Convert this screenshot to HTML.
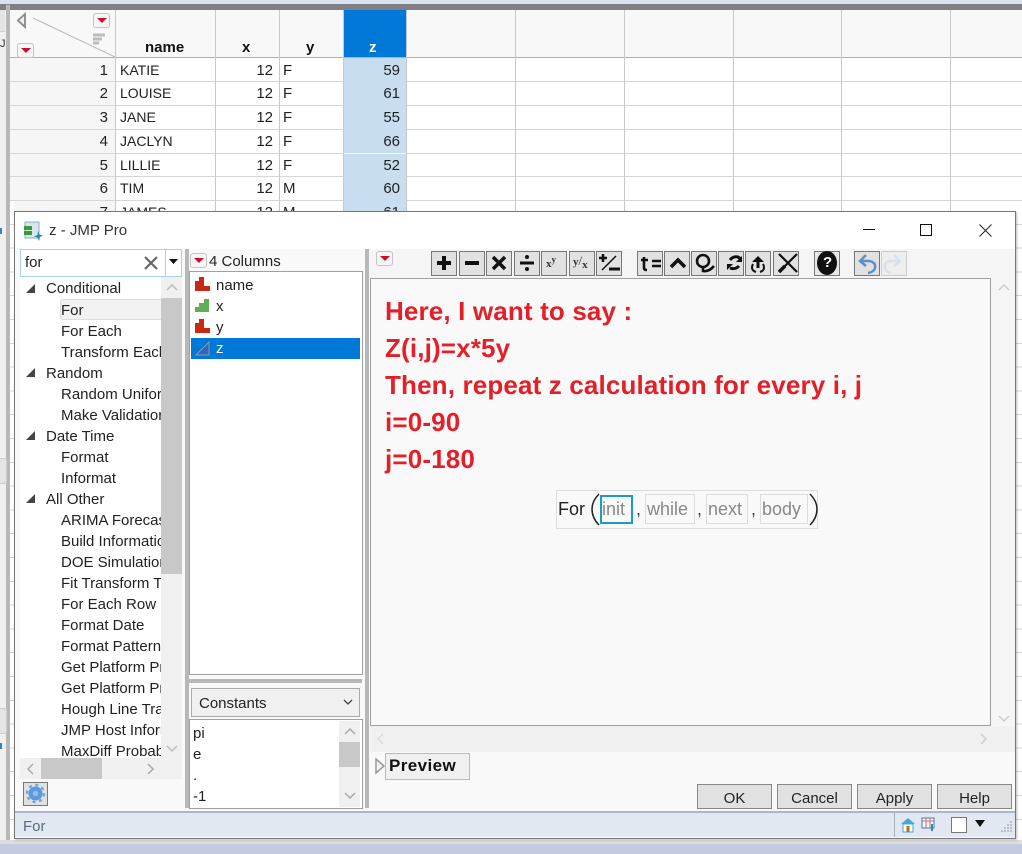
<!DOCTYPE html>
<html><head><meta charset="utf-8"><style>
html,body{margin:0;padding:0;background:#fff}
#p{position:relative;width:1022px;height:854px;overflow:hidden;font-family:"Liberation Sans",sans-serif;font-size:15px;color:#222;background:#fff}
#p div,#p span.t,#p svg{position:absolute}
.t{white-space:nowrap;line-height:20px;display:block;margin-top:1px}
.r{text-align:right}
.b{font-weight:bold;color:#111}
.t.n{font-size:14px;margin-top:0}
.tb{width:24px;height:23px;background:#e1e1e1;border:1px solid #777;top:251px}
.btn{top:784px;width:73px;height:23px;background:#e1e1e1;border:1px solid #888;text-align:center;line-height:27px;color:#222;font-size:15px}
.redbtn{width:15px;height:13px;background:#f6f6f6;border:1px solid #c4c4c4;border-radius:3px}
.redbtn:after{content:"";position:absolute;left:3px;top:4px;border-left:5px solid transparent;border-right:5px solid transparent;border-top:5px solid #c8102e}
.red{left:385px;color:#e32029;font-weight:bold;font-size:26px;line-height:36px;white-space:nowrap;letter-spacing:.15px}
.ph{top:494px;height:28px;background:#f9f9f9;border:1px solid #ddd;color:#888;font-size:18px;line-height:28px;text-align:left;padding-left:1px}
.cm{color:#444;font-size:18px;top:498px}
</style></head><body><div id="p">

<!-- background strip -->
<div style="left:0;top:0;width:1022px;height:4px;background:#dbe3f1"></div>
<div style="left:0;top:4px;width:1022px;height:6px;background:#7f8086"></div>
<div style="left:0;top:10px;width:6px;height:844px;background:#f0f0f0"></div>
<div style="left:6px;top:5px;width:4px;height:849px;background:#b8b8b8"></div>
<div style="left:0;top:10px;width:5px;height:21px;background:#e4e4e4;border-bottom:1px solid #ccc"></div>
<span class="t" style="left:0;top:33px;font-size:11px;color:#333">J</span>
<div style="left:0;top:228px;width:2px;height:6px;background:#3a80c0"></div>
<div style="left:0;top:743px;width:2px;height:6px;background:#3a80c0"></div>
<div style="left:10px;top:10px;width:1012px;height:47px;background:#f8f8f8"></div>
<div style="left:10px;top:57px;width:105px;height:160px;background:#f6f6f6"></div>

<!-- grid -->
<div style="left:10px;top:57px;width:1012px;height:1px;background:#b0b0b0"></div>
<div style="left:10px;top:81px;width:1012px;height:1px;background:#d5d5da"></div>
<div style="left:10px;top:105px;width:1012px;height:1px;background:#d5d5da"></div>
<div style="left:10px;top:129px;width:1012px;height:1px;background:#d5d5da"></div>
<div style="left:10px;top:153px;width:1012px;height:1px;background:#d5d5da"></div>
<div style="left:10px;top:176px;width:1012px;height:1px;background:#d5d5da"></div>
<div style="left:10px;top:200px;width:1012px;height:1px;background:#d5d5da"></div>
<div style="left:115px;top:10px;width:1px;height:205px;background:#c8c8cc"></div>
<div style="left:215px;top:10px;width:1px;height:205px;background:#c8c8cc"></div>
<div style="left:279px;top:10px;width:1px;height:205px;background:#c8c8cc"></div>
<div style="left:343px;top:10px;width:1px;height:205px;background:#c8c8cc"></div>
<div style="left:406px;top:10px;width:1px;height:205px;background:#c8c8cc"></div>
<div style="left:515px;top:10px;width:1px;height:205px;background:#c8c8cc"></div>
<div style="left:624px;top:10px;width:1px;height:205px;background:#c8c8cc"></div>
<div style="left:733px;top:10px;width:1px;height:205px;background:#c8c8cc"></div>
<div style="left:841px;top:10px;width:1px;height:205px;background:#c8c8cc"></div>
<div style="left:950px;top:10px;width:1px;height:205px;background:#c8c8cc"></div>
<div style="left:344px;top:10px;width:62px;height:47px;background:#0078d7"></div>
<div style="left:344px;top:58px;width:62px;height:159px;background:#c9ddf0"></div>
<div style="left:344px;top:153px;width:62px;height:1px;background:#f4f8fc"></div>
<div style="left:10px;top:200px;width:4px;height:640px;background:repeating-linear-gradient(to bottom,#d5d5da 0,#d5d5da 1px,#fff 1px,#fff 23.800px)"></div>
<div style="left:1016px;top:200px;width:6px;height:640px;background:repeating-linear-gradient(to bottom,#d5d5da 0,#d5d5da 1px,#fff 1px,#fff 23.800px)"></div>

<!-- corner -->
<svg style="left:10px;top:10px" width="106" height="48"><line x1="23" y1="8" x2="105" y2="47" stroke="#bbb"/><path d="M15 4 L8 10.500 L15 17Z" fill="#f0f0f0" stroke="#888" stroke-width="1.800"/><path d="M83 25h12M83 29h9M83 33h6" stroke="#bcbcbc" stroke-width="3"/></svg>
<div class="redbtn" style="left:93px;top:13px"></div>
<div class="redbtn" style="left:17px;top:43px"></div>

<span class="t b" style="left:145px;top:37px">name</span>
<span class="t b" style="left:242px;top:37px">x</span>
<span class="t b" style="left:306px;top:37px">y</span>
<span class="t" style="left:369px;top:37px;color:#fff;font-weight:bold">z</span>

<span class="t r" style="left:60px;width:48px;top:60px">1</span><span class="t n" style="left:120px;top:60px">KATIE</span><span class="t r" style="left:220px;width:53px;top:60px">12</span><span class="t" style="left:283px;top:60px">F</span><span class="t r" style="left:350px;width:50px;top:60px">59</span>
<span class="t r" style="left:60px;width:48px;top:83px">2</span><span class="t n" style="left:120px;top:83px">LOUISE</span><span class="t r" style="left:220px;width:53px;top:83px">12</span><span class="t" style="left:283px;top:83px">F</span><span class="t r" style="left:350px;width:50px;top:83px">61</span>
<span class="t r" style="left:60px;width:48px;top:107px">3</span><span class="t n" style="left:120px;top:107px">JANE</span><span class="t r" style="left:220px;width:53px;top:107px">12</span><span class="t" style="left:283px;top:107px">F</span><span class="t r" style="left:350px;width:50px;top:107px">55</span>
<span class="t r" style="left:60px;width:48px;top:131px">4</span><span class="t n" style="left:120px;top:131px">JACLYN</span><span class="t r" style="left:220px;width:53px;top:131px">12</span><span class="t" style="left:283px;top:131px">F</span><span class="t r" style="left:350px;width:50px;top:131px">66</span>
<span class="t r" style="left:60px;width:48px;top:155px">5</span><span class="t n" style="left:120px;top:155px">LILLIE</span><span class="t r" style="left:220px;width:53px;top:155px">12</span><span class="t" style="left:283px;top:155px">F</span><span class="t r" style="left:350px;width:50px;top:155px">52</span>
<span class="t r" style="left:60px;width:48px;top:178px">6</span><span class="t n" style="left:120px;top:178px">TIM</span><span class="t r" style="left:220px;width:53px;top:178px">12</span><span class="t" style="left:283px;top:178px">M</span><span class="t r" style="left:350px;width:50px;top:178px">60</span>
<span class="t r" style="left:60px;width:48px;top:202px">7</span><span class="t n" style="left:120px;top:202px">JAMES</span><span class="t r" style="left:220px;width:53px;top:202px">12</span><span class="t" style="left:283px;top:202px">M</span><span class="t r" style="left:350px;width:50px;top:202px">61</span>

<!-- bottom strips -->
<div style="left:0;top:840px;width:1022px;height:4px;background:#dcdcdc"></div>
<div style="left:0;top:844px;width:1022px;height:10px;background:#c2cbdf"></div>
<div style="left:0;top:458px;width:6px;height:24px;background:#e4e4e4;border:1px solid #ccc;border-left:0"></div>
<div style="left:0;top:708px;width:6px;height:24px;background:#e4e4e4;border:1px solid #ccc;border-left:0"></div>

<!-- dialog -->
<div style="left:14px;top:211px;width:1000px;height:626px;background:#f9f9f9;border:1px solid #777;box-shadow:1px 1px 2px rgba(0,0,0,.25)"></div>
<div style="left:15px;top:212px;width:1000px;height:37px;background:#fff"></div>
<svg style="left:23px;top:220px" width="22" height="22"><rect x="2" y="2" width="14" height="16" fill="#d8e4ee" stroke="#9ab" /><rect x="1" y="6" width="8" height="4" fill="#3a9a3a"/><rect x="1" y="11" width="8" height="4" fill="#3a9a3a"/><path d="M15 11l1.500 3.500 3.500 1-3 1.500-1 4-1.500-3.500-3.500-1 3.500-1.500z" fill="#2a8ac0"/></svg>
<span class="t" style="left:49px;top:220px;color:#333;font-size:15px">z - JMP Pro</span>
<div style="left:863px;top:229px;width:12px;height:1px;background:#111"></div>
<div style="left:920px;top:224px;width:10px;height:10px;border:1px solid #111"></div>
<svg style="left:979px;top:224px" width="13" height="13"><path d="M.5.5L12.500 12.500M12.500.5L.5 12.500" stroke="#222" fill="none"/></svg>

<!-- search -->
<div style="left:20px;top:249px;width:160px;height:26px;background:#fff;border:1px solid #a9d0ea"></div>
<div style="left:165px;top:249px;width:1px;height:28px;background:#a9d0ea"></div>
<span class="t" style="left:25px;top:252px">for</span>
<svg style="left:143px;top:255px" width="16" height="16"><path d="M2 2L14 14M14 2L2 14" stroke="#666" stroke-width="2.200"/></svg>
<svg style="left:168px;top:259px" width="11" height="6"><path d="M1 0H10L5.500 5Z" fill="#111"/></svg>

<!-- tree -->
<div style="left:20px;top:277px;width:141px;height:481px;background:#fff"></div>
<svg style="left:26px;top:284px" width="10" height="10"><path d="M9 0V9H0Z" fill="#444"/></svg>
<svg style="left:26px;top:368px" width="10" height="10"><path d="M9 0V9H0Z" fill="#444"/></svg>
<svg style="left:26px;top:431px" width="10" height="10"><path d="M9 0V9H0Z" fill="#444"/></svg>
<svg style="left:26px;top:494px" width="10" height="10"><path d="M9 0V9H0Z" fill="#444"/></svg>
<div style="left:60px;top:299px;width:101px;height:19px;background:#f2f2f2;border:1px solid #ddd;border-right:0;border-radius:3px 0 0 3px"></div>
<div style="left:20px;top:277px;width:141px;height:481px;overflow:hidden;background:transparent">
<span class="t" style="left:26px;top:1px">Conditional</span>
<span class="t" style="left:41px;top:23px">For</span>
<span class="t" style="left:41px;top:44px">For Each</span>
<span class="t" style="left:41px;top:65px">Transform Each</span>
<span class="t" style="left:26px;top:86px">Random</span>
<span class="t" style="left:41px;top:107px">Random Uniform</span>
<span class="t" style="left:41px;top:128px">Make Validation</span>
<span class="t" style="left:26px;top:149px">Date Time</span>
<span class="t" style="left:41px;top:170px">Format</span>
<span class="t" style="left:41px;top:191px">Informat</span>
<span class="t" style="left:26px;top:212px">All Other</span>
<span class="t" style="left:41px;top:233px">ARIMA Forecast</span>
<span class="t" style="left:41px;top:254px">Build Information</span>
<span class="t" style="left:41px;top:275px">DOE Simulation</span>
<span class="t" style="left:41px;top:296px">Fit Transform To</span>
<span class="t" style="left:41px;top:317px">For Each Row</span>
<span class="t" style="left:41px;top:338px">Format Date</span>
<span class="t" style="left:41px;top:359px">Format Pattern</span>
<span class="t" style="left:41px;top:380px">Get Platform Pr</span>
<span class="t" style="left:41px;top:401px">Get Platform Pr</span>
<span class="t" style="left:41px;top:422px">Hough Line Tra</span>
<span class="t" style="left:41px;top:443px">JMP Host Inform</span>
<span class="t" style="left:41px;top:464px">MaxDiff Probab</span>
</div>
<div style="left:161px;top:277px;width:21px;height:491px;background:#f0f0f0"></div>
<div style="left:161px;top:298px;width:21px;height:276px;background:#c8c8c8"></div>
<svg style="left:165px;top:283px" width="14" height="10"><path d="M2 7L7 2L12 7" stroke="#bbb" stroke-width="1.500" fill="none"/></svg>
<svg style="left:165px;top:744px" width="14" height="10"><path d="M2 2L7 7L12 2" stroke="#bbb" stroke-width="1.500" fill="none"/></svg>
<div style="left:20px;top:758px;width:162px;height:21px;background:#f0f0f0"></div>
<div style="left:41px;top:758px;width:61px;height:21px;background:#c8c8c8"></div>
<svg style="left:26px;top:762px" width="10" height="14"><path d="M7 2L2 7L7 12" stroke="#aaa" stroke-width="1.500" fill="none"/></svg>
<svg style="left:146px;top:762px" width="10" height="14"><path d="M2 2L7 7L2 12" stroke="#aaa" stroke-width="1.500" fill="none"/></svg>
<div style="left:23px;top:782px;width:23px;height:22px;background:#e1e1e1;border:1px solid #777"></div>
<svg style="left:25px;top:783px" width="21" height="21"><circle cx="10.500" cy="10.500" r="7" fill="#5b9ade"/><circle cx="10.500" cy="10.500" r="8.500" fill="none" stroke="#6ea8e4" stroke-width="2.500" stroke-dasharray="3 3.600"/><circle cx="10.500" cy="10.500" r="2.800" fill="#8fbcea"/></svg>

<!-- separators -->
<div style="left:185px;top:249px;width:4px;height:559px;background:#b8b8b8"></div>
<div style="left:365px;top:249px;width:4px;height:559px;background:#b8b8b8"></div>

<!-- columns -->
<div class="redbtn" style="left:190px;top:253px"></div>
<span class="t" style="left:209px;top:251px">4 Columns</span>
<div style="left:189px;top:271px;width:172px;height:402px;background:#fff;border:1px solid #a0a0a0"></div>
<div style="left:191px;top:338px;width:169px;height:21px;background:#0078d7"></div>
<svg style="left:194px;top:277px" width="16" height="16"><path d="M1 14V4H5V0H10V9H16V14Z" fill="#c62a14"/></svg>
<svg style="left:194px;top:298px" width="16" height="16"><path d="M1 14V9H5V5H10V1H15V14Z" fill="#5fae57"/></svg>
<svg style="left:194px;top:319px" width="16" height="16"><path d="M1 14V4H5V0H10V9H16V14Z" fill="#c62a14"/></svg>
<svg style="left:195px;top:341px" width="16" height="15"><path d="M1 14L14 1V14Z" fill="#2f66b5" stroke="#7f9cc8"/></svg>
<span class="t" style="left:216px;top:275px">name</span>
<span class="t" style="left:216px;top:296px">x</span>
<span class="t" style="left:216px;top:317px">y</span>
<span class="t" style="left:216px;top:338px;color:#fff">z</span>
<div style="left:189px;top:679px;width:173px;height:4px;background:#b8b8b8"></div>
<div style="left:191px;top:688px;width:167px;height:27px;background:#f0f0f0;border:1px solid #aaa"></div>
<span class="t" style="left:199px;top:693px">Constants</span>
<svg style="left:342px;top:698px" width="12" height="8"><path d="M2 2L6 6L10 2" stroke="#444" stroke-width="1.300" fill="none"/></svg>
<div style="left:189px;top:719px;width:172px;height:88px;background:#fff;border:1px solid #a0a0a0"></div>
<span class="t" style="left:193px;top:723px">pi</span>
<span class="t" style="left:193px;top:744px">e</span>
<span class="t" style="left:193px;top:765px">.</span>
<span class="t" style="left:193px;top:786px">-1</span>
<div style="left:339px;top:721px;width:21px;height:86px;background:#f0f0f0"></div>
<div style="left:339px;top:742px;width:21px;height:25px;background:#c8c8c8"></div>
<svg style="left:343px;top:727px" width="14" height="10"><path d="M2 7L7 2L12 7" stroke="#aaa" stroke-width="1.500" fill="none"/></svg>
<svg style="left:343px;top:791px" width="14" height="10"><path d="M2 2L7 7L12 2" stroke="#aaa" stroke-width="1.500" fill="none"/></svg>

<!-- toolbar -->
<div style="left:369px;top:249px;width:646px;height:29px;background:#f5f5f5"></div>
<div class="redbtn" style="left:376px;top:251px"></div>
<div class="tb" style="left:431px"></div><div class="tb" style="left:459px"></div><div class="tb" style="left:486px"></div><div class="tb" style="left:514px"></div><div class="tb" style="left:541px"></div><div class="tb" style="left:569px"></div><div class="tb" style="left:596px"></div>
<div class="tb" style="left:637px"></div><div class="tb" style="left:664px"></div><div class="tb" style="left:691px"></div><div class="tb" style="left:718px"></div><div class="tb" style="left:745px"></div><div class="tb" style="left:773px"></div>
<div class="tb" style="left:814px;background:#e8e8e8"></div><div class="tb" style="left:854px"></div><div class="tb" style="left:881px;background:#eee;border-color:#ccc"></div>
<svg style="left:430px;top:250px" width="480" height="26" fill="none" stroke="#111">
<path d="M14 6V20M7 13H21" stroke-width="4"/>
<path d="M35 13H49" stroke-width="4"/>
<path d="M63 7L75 19M75 7L63 19" stroke-width="3.500"/>
<path d="M90 13H104" stroke-width="3"/><circle cx="97" cy="7" r="2" fill="#111" stroke="none"/><circle cx="97" cy="19" r="2" fill="#111" stroke="none"/>
<path d="M173 4V12M169 8H177" stroke-width="2.500"/><path d="M172 20L186 6" stroke-width="1.500"/><path d="M179 19H190" stroke-width="3"/>
<path d="M214 7V18Q214 20 217 20M211 10H218M222 11H231M222 16H231" stroke-width="2.600"/>
<path d="M241 17L248 10L255 17" stroke-width="3.500"/>
<circle cx="273" cy="11" r="6" stroke-width="2.600"/><path d="M273 17V21Q279 22 284 16" stroke-width="2.600"/>
<path d="M300 10Q303 6 308 7L311 9M309 16Q305 20 300 18" stroke-width="3"/><path d="M312 6V12H306Z" fill="#111" stroke="none"/><path d="M297 20V14H303Z" fill="#111" stroke="none"/>
<path d="M328 6L322 12H334Z" fill="#111" stroke="none"/><path d="M328 11V18" stroke-width="3"/><path d="M323 14Q320 20 326 22M333 14Q336 20 330 22" stroke-width="2"/>
<path d="M349 4L367 22M367 4L349 22" stroke-width="2.200"/><path d="M349 22L355 16" stroke-width="3.500"/>
<ellipse cx="397" cy="13" rx="10" ry="12" fill="#111" stroke="none"/>
<path d="M436 5L430 11L436 16" stroke="#5f8fc8" stroke-width="2.500"/><path d="M431 11H439Q446 12 445 18Q444 22 438 23" stroke="#5f8fc8" stroke-width="2.500"/>
<path d="M464 5L470 11L464 16" stroke="#d8e2ec" stroke-width="2.500"/><path d="M469 11H460Q454 12 455 18Q456 22 461 23" stroke="#d8e2ec" stroke-width="2.500"/>
</svg>
<span class="t" style="left:823px;top:252px;color:#fff;font-weight:bold;font-size:15px">?</span>
<span class="t" style="left:546px;top:253px;font-family:'Liberation Serif',serif;font-size:11px;font-weight:bold;color:#333">x<sup style="font-size:9px;line-height:0">y</sup></span>
<span class="t" style="left:573px;top:250px;font-family:'Liberation Serif',serif;font-size:11px;font-weight:bold;color:#333">y<span style="font-size:13px;font-weight:normal">/</span><span style="position:relative;top:3px">x</span></span>

<!-- editor -->
<div style="left:991px;top:278px;width:24px;height:447px;background:#f5f5f5"></div>
<div style="left:370px;top:278px;width:619px;height:446px;background:#f9f9f9;border:1px solid #a0a0a0"></div>
<div style="left:370px;top:726px;width:645px;height:26px;background:#f0f0f0"></div>
<svg style="left:997px;top:283px" width="14" height="10"><path d="M2 7L7 2L12 7" stroke="#ccc" stroke-width="1.500" fill="none"/></svg>
<svg style="left:997px;top:714px" width="14" height="10"><path d="M2 2L7 7L12 2" stroke="#ccc" stroke-width="1.500" fill="none"/></svg>
<svg style="left:376px;top:732px" width="10" height="14"><path d="M7 2L2 7L7 12" stroke="#ddd" stroke-width="1.500" fill="none"/></svg>
<svg style="left:979px;top:732px" width="10" height="14"><path d="M2 2L7 7L2 12" stroke="#ccc" stroke-width="1.500" fill="none"/></svg>

<div class="red" style="top:293px">Here, I want to say :</div>
<div class="red" style="top:330px">Z(i,j)=x*5y</div>
<div class="red" style="top:367px">Then, repeat z calculation for every i, j</div>
<div class="red" style="top:404px">i=0-90</div>
<div class="red" style="top:441px">j=0-180</div>

<div style="left:556px;top:490px;width:260px;height:37px;background:#f9f9f9;border:1px solid #ddd"></div>
<span class="t" style="left:558px;top:498px;font-size:18px;color:#222">For</span>
<svg style="left:590px;top:493px" width="12" height="33"><path d="M9 1Q2 8 2 16Q2 25 9 32" stroke="#222" stroke-width="1.500" fill="none"/></svg>
<svg style="left:808px;top:493px" width="12" height="33"><path d="M2 1Q9 8 9 16Q9 25 2 32" stroke="#222" stroke-width="1.500" fill="none"/></svg>
<div class="ph" style="left:600px;top:495px;width:29px;border:2px solid #1a9cc4;background:#f9f9f9;height:25px;line-height:25px;padding-left:0">init</div>
<span class="t cm" style="left:636px">,</span>
<div class="ph" style="left:645px;width:47px">while</div>
<span class="t cm" style="left:697px">,</span>
<div class="ph" style="left:706px;width:39px">next</div>
<span class="t cm" style="left:751px">,</span>
<div class="ph" style="left:760px;width:45px">body</div>

<!-- preview -->
<svg style="left:374px;top:757px" width="12" height="18"><path d="M2 2L10 9L2 16Z" fill="#f4f4f4" stroke="#999" stroke-width="1.500"/></svg>
<div style="left:385px;top:753px;width:83px;height:25px;background:#f0f0f0;border:1px solid #bbb"></div>
<span class="t" style="left:389px;top:755px;font-weight:bold;font-size:17px;color:#111;letter-spacing:.4px">Preview</span>

<!-- buttons -->
<div class="btn" style="left:697px">OK</div>
<div class="btn" style="left:777px">Cancel</div>
<div class="btn" style="left:857px">Apply</div>
<div class="btn" style="left:937px">Help</div>

<!-- status -->
<div style="left:15px;top:811px;width:1000px;height:26px;background:#e1e8f2;border-top:2px solid #adb5cc;box-sizing:border-box"></div>
<span class="t" style="left:23px;top:816px;color:#5a6a80">For</span>
<div style="left:894px;top:813px;width:1px;height:24px;background:#a8b0bd"></div>
<svg style="left:900px;top:816px" width="38" height="18"><path d="M1 8L8 2L15 8" fill="#49a7d8"/><path d="M3 8H13V16H3Z" fill="#fff" stroke="#49a7d8"/><rect x="6.500" y="10" width="3" height="6" fill="#a67a10"/><rect x="22" y="2" width="12" height="10" fill="#f4f6fa" stroke="#5478a8"/><path d="M22 5H34M26 2V12M30 2V12" stroke="#c05050" stroke-width=".8"/><path d="M32 8V15" stroke="#2a8ac0" stroke-width="2"/></svg>
<div style="left:951px;top:817px;width:14px;height:14px;background:#fff;border:1px solid #777"></div>
<svg style="left:974px;top:819px" width="12" height="9"><path d="M1 1H11L6 8Z" fill="#111"/></svg>
<svg style="left:998px;top:820px" width="16" height="16" fill="#b9c0cc"><rect x="12" y="1" width="2" height="2"/><rect x="9" y="4" width="2" height="2"/><rect x="12" y="4" width="2" height="2"/><rect x="6" y="7" width="2" height="2"/><rect x="9" y="7" width="2" height="2"/><rect x="12" y="7" width="2" height="2"/><rect x="3" y="10" width="2" height="2"/><rect x="6" y="10" width="2" height="2"/><rect x="9" y="10" width="2" height="2"/><rect x="12" y="10" width="2" height="2"/></svg>

</div></body></html>
